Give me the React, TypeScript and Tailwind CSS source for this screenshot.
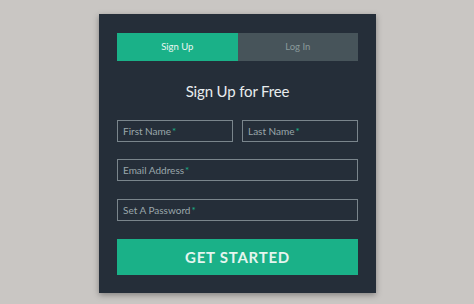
import { useState } from "react";

const FONT = { fontFamily: 'Lato, "Open Sans", "Liberation Sans", sans-serif' };

function Field({ label, className = "" }: { label: string; className?: string }) {
  return (
    <div
      className={`h-[22px] border border-[#7a858c] flex items-center px-[5px] text-[10px] text-[#9aa7ab] ${className}`}
    >
      {label}
      <span className="text-[#1ab188] ml-[1px]">*</span>
    </div>
  );
}

export default function App() {
  const [tab, setTab] = useState<"signup" | "login">("signup");

  return (
    <div className="w-[474px] h-[304px] bg-[#c9c6c3] overflow-hidden" style={FONT}>
      <div className="ml-[99px] mt-[14px] w-[277px] h-[279px] bg-[#252e39] shadow-[0_2px_6px_rgba(0,0,0,0.35)] px-[18px] pt-[19px]">
        {/* Tabs */}
        <div className="flex h-[28px] text-[9.5px]">
          <button
            onClick={() => setTab("signup")}
            className={`flex-1 flex items-center justify-center ${
              tab === "signup" ? "bg-[#1ab188] text-[#eaf7f2]" : "bg-[#47545a] text-[#8a9a9a]"
            }`}
          >
            Sign Up
          </button>
          <button
            onClick={() => setTab("login")}
            className={`flex-1 flex items-center justify-center ${
              tab === "login" ? "bg-[#1ab188] text-[#eaf7f2]" : "bg-[#47545a] text-[#8a9a9a]"
            }`}
          >
            Log In
          </button>
        </div>

        <h1 className="text-center text-[#e8ecee] text-[15px] tracking-[-0.01em] mt-[18px] leading-[24px]">
          Sign Up for Free
        </h1>

        <div className="flex gap-[9px] mt-[17px]">
          <Field label="First Name" className="flex-1" />
          <Field label="Last Name" className="flex-1" />
        </div>
        <Field label="Email Address" className="mt-[17px]" />
        <Field label="Set A Password" className="mt-[18px]" />

        <button className="mt-[18px] w-full h-[36px] bg-[#1ab188] text-[#e4f5ef] font-bold text-[15px] tracking-[0.05em]">
          GET STARTED
        </button>
      </div>
    </div>
  );
}
